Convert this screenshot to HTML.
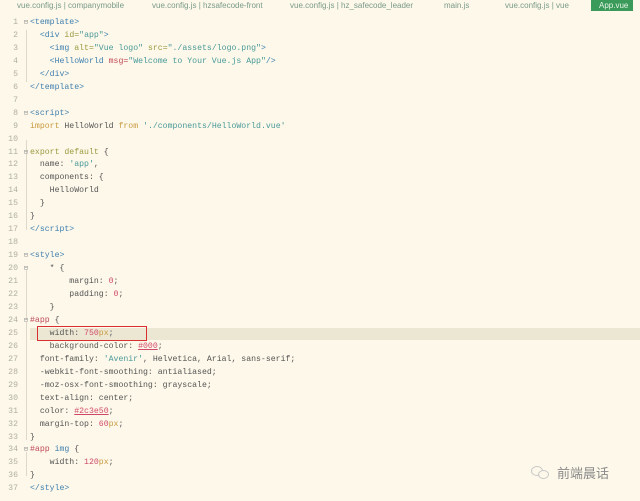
<!DOCTYPE html>
<html><head><meta charset="utf-8"><style>
body{margin:0;width:640px;height:501px;background:#fdf8e9;overflow:hidden;position:relative;font-family:"Liberation Sans",sans-serif}
.tab{position:absolute;top:0;height:11px;font-size:8px;color:#7a9a8a;line-height:11px}
.act{background:#3a9a5a;color:#e8f5e8;padding:0 8px;left:591px;width:26px}
.code{position:absolute;left:0;top:17px;font-family:"Liberation Mono",monospace;font-size:8.2px;line-height:12.95px;color:#555;white-space:pre}
.ln{display:inline-block;width:18px;text-align:right;color:#b0b0a0;padding-right:12px;position:relative}
.f{position:absolute;right:2px;color:#999;font-size:7px}
.hl{position:absolute;left:30px;top:328px;width:610px;height:12px;background:#ece7d3}
.box{position:absolute;left:37px;top:326px;width:110px;height:15px;border:1.5px solid #d83030;box-sizing:border-box}
.guide{position:absolute;left:26px;border-left:1px solid #ddd8c8}
.t{color:#3f7fb0}.a{color:#9a9a40}.r{color:#c04858}.s{color:#4a9a9a}.k{color:#c89a40}.n{color:#d04868}
</style></head><body>
<div class="tab" style="left:17px">vue.config.js | companymobile</div>
<div class="tab" style="left:152px">vue.config.js | hzsafecode-front</div>
<div class="tab" style="left:290px">vue.config.js | hz_safecode_leader</div>
<div class="tab" style="left:444px">main.js</div>
<div class="tab" style="left:505px">vue.config.js | vue</div>
<div class="tab act">App.vue</div>
<div class="hl"></div>
<div class="guide" style="top:30px;height:52px"></div>
<div class="guide" style="top:140px;height:90px"></div>
<div class="guide" style="top:270px;height:50px"></div>
<div class="guide" style="top:322px;height:118px"></div>
<div class="guide" style="top:452px;height:24px"></div>
<div class="code"><span class="ln">1<span class="f">⊟</span></span><span class="t">&lt;template&gt;</span>
<span class="ln">2</span>  <span class="t">&lt;div</span> <span class="a">id=</span><span class="s">"app"</span><span class="t">&gt;</span>
<span class="ln">3</span>    <span class="t">&lt;img</span> <span class="a">alt=</span><span class="s">"Vue logo"</span> <span class="a">src=</span><span class="s">"./assets/logo.png"</span><span class="t">&gt;</span>
<span class="ln">4</span>    <span class="t">&lt;HelloWorld</span> <span class="r">msg=</span><span class="s">"Welcome to Your Vue.js App"</span><span class="t">/&gt;</span>
<span class="ln">5</span>  <span class="t">&lt;/div&gt;</span>
<span class="ln">6</span><span class="t">&lt;/template&gt;</span>
<span class="ln">7</span>
<span class="ln">8<span class="f">⊟</span></span><span class="t">&lt;script&gt;</span>
<span class="ln">9</span><span class="k">import</span> HelloWorld <span class="k">from</span> <span class="s">'./components/HelloWorld.vue'</span>
<span class="ln">10</span>
<span class="ln">11<span class="f">⊟</span></span><span class="a">export default</span> {
<span class="ln">12</span>  name: <span class="s">'app'</span>,
<span class="ln">13</span>  components: {
<span class="ln">14</span>    HelloWorld
<span class="ln">15</span>  }
<span class="ln">16</span>}
<span class="ln">17</span><span class="t">&lt;/script&gt;</span>
<span class="ln">18</span>
<span class="ln">19<span class="f">⊟</span></span><span class="t">&lt;style&gt;</span>
<span class="ln">20<span class="f">⊟</span></span>    * {
<span class="ln">21</span>        margin: <span class="n">0</span>;
<span class="ln">22</span>        padding: <span class="n">0</span>;
<span class="ln">23</span>    }
<span class="ln">24<span class="f">⊟</span></span><span class="r">#app</span> {
<span class="ln">25</span>    width: <span class="n">750</span><span class="k">px</span>;
<span class="ln">26</span>    background-color: <span class="n" style="text-decoration:underline">#000</span>;
<span class="ln">27</span>  font-family: <span class="s">'Avenir'</span>, Helvetica, Arial, sans-serif;
<span class="ln">28</span>  -webkit-font-smoothing: antialiased;
<span class="ln">29</span>  -moz-osx-font-smoothing: grayscale;
<span class="ln">30</span>  text-align: center;
<span class="ln">31</span>  color: <span class="n" style="text-decoration:underline">#2c3e50</span>;
<span class="ln">32</span>  margin-top: <span class="n">60</span><span class="k">px</span>;
<span class="ln">33</span>}
<span class="ln">34<span class="f">⊟</span></span><span class="r">#app</span> <span class="t">img</span> {
<span class="ln">35</span>    width: <span class="n">120</span><span class="k">px</span>;
<span class="ln">36</span>}
<span class="ln">37</span><span class="t">&lt;/style&gt;</span></div>
<div class="box"></div>
<div style="position:absolute;left:531px;top:466px;width:10px;height:8px;border:1.5px solid #c8c8c8;border-radius:50%"></div>
<div style="position:absolute;left:538px;top:470px;width:9px;height:7px;border:1.5px solid #c8c8c8;border-radius:50%;background:#fdf8e9"></div>
<div style="position:absolute;left:557px;top:463px;font-family:'Liberation Sans','Noto Sans CJK SC',sans-serif;font-size:13px;color:#8a8a8a">前端晨话</div>
</body></html>
